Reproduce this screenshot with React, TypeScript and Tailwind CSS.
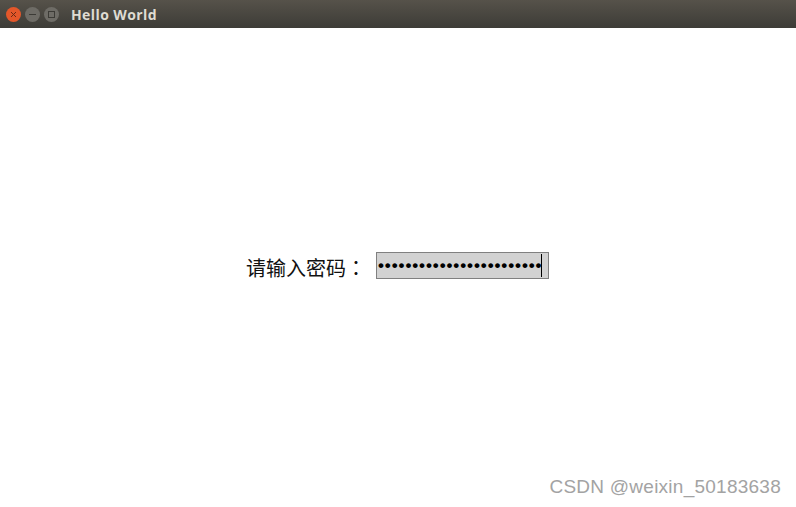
const bullets = '•'.repeat(24);

function WindowButtons() {
  return (
    <div className="flex items-center gap-[4px]">
      <div className="w-[15px] h-[15px] rounded-full bg-[#e4572a] flex items-center justify-center">
        <svg width="7" height="7" viewBox="0 0 7 7" fill="none" stroke="#6b2a14" strokeWidth="1">
          <path d="M1 1 L6 6 M6 1 L1 6" />
        </svg>
      </div>
      <div className="w-[15px] h-[15px] rounded-full bg-[#6e6c66] flex items-center justify-center">
        <svg width="9" height="7" viewBox="0 0 9 7" fill="none" stroke="#3c3b36" strokeWidth="1">
          <path d="M1 3.5 L8 3.5" />
        </svg>
      </div>
      <div className="w-[15px] h-[15px] rounded-full bg-[#6e6c66] flex items-center justify-center">
        <svg width="7" height="7" viewBox="0 0 7 7" fill="none" stroke="#3c3b36" strokeWidth="1">
          <rect x="0.5" y="0.5" width="6" height="6" />
        </svg>
      </div>
    </div>
  );
}

export default function App() {
  return (
    <div className="relative w-[796px] h-[507px] bg-white flex flex-col overflow-hidden font-['Liberation_Sans','Noto_Sans_CJK_SC',sans-serif]">
      <div className="h-[28px] pl-[6px] flex items-center gap-[12px] bg-gradient-to-b from-[#56524a] to-[#3d3c37]">
        <WindowButtons />
        <span className="text-[14px] font-bold tracking-[0.4px] text-[#dfdbd2] font-['Open_Sans',sans-serif]">Hello World</span>
      </div>

      <div className="flex-1 flex items-start pt-[224px] pl-[246px]">
        <span className="w-[130px] mt-[2px] text-[20px] leading-[28px] text-[#111] font-['Noto_Sans_CJK_SC',sans-serif]">
          请输入密码<span className="font-['Noto_Sans_CJK_JP',sans-serif]">：</span>
        </span>
        <div className="w-[173px] h-[27px] bg-[#d2d2d2] border border-[#808080] pl-[1px] flex items-center">
          <span className="text-[17px] leading-none tracking-[0.9px] text-black font-['Liberation_Sans',sans-serif] font-bold">{bullets}</span>
          <div className="w-px h-[23px] bg-black ml-[-1px]" />
        </div>
      </div>

      <span className="absolute right-[15px] bottom-[8px] text-[19px] leading-[24px] tracking-[0.25px] text-[#a3a3a3] font-['Liberation_Sans',sans-serif]">CSDN @weixin_50183638</span>
    </div>
  );
}
